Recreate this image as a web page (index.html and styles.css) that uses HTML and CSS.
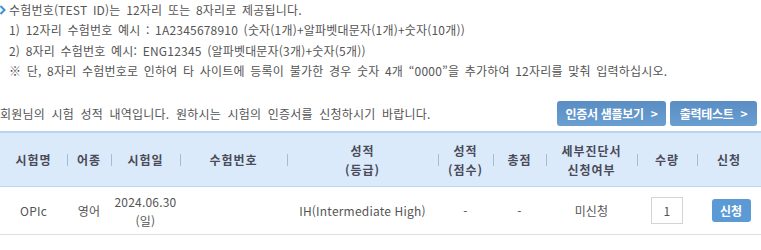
FILE: index.html
```html
<!DOCTYPE html>
<html lang="ko">
<head>
<meta charset="utf-8">
<link rel="stylesheet" href="styles.css">
</head>
<body>
<div class="notice">
  <p class="lead"><svg class="arrow" width="6" height="10" viewBox="0 0 6 10"><path d="M0.5 1 L4.5 5 L0.5 9" fill="none" stroke="#3d8fd6" stroke-width="2"/></svg>수험번호(TEST ID)는 12자리 또는 8자리로 제공됩니다.</p>
  <p class="sub">1) 12자리 수험번호 예시 : 1A2345678910 (숫자(1개)+알파벳대문자(1개)+숫자(10개))</p>
  <p class="sub">2) 8자리 수험번호 예시: ENG12345 (알파벳대문자(3개)+숫자(5개))</p>
  <p class="sub">※ 단, 8자리 수험번호로 인하여 타 사이트에 등록이 불가한 경우 숫자 4개 “0000”을 추가하여 12자리를 맞춰 입력하십시오.</p>
</div>
<div class="toolbar">
  <span class="desc">회원님의 시험 성적 내역입니다. 원하시는 시험의 인증서를 신청하시기 바랍니다.</span>
  <div class="btns">
    <a class="btn btn-sample">인증서 샘플보기 <span class="chev">&gt;</span></a>
    <a class="btn btn-print">출력테스트 <span class="chev">&gt;</span></a>
  </div>
</div>
<table class="grid">
  <colgroup>
    <col style="width:67px"><col style="width:44px"><col style="width:69px"><col style="width:107px"><col style="width:151px"><col style="width:55px"><col style="width:53px"><col style="width:91px"><col style="width:60px"><col>
  </colgroup>
  <thead>
    <tr>
      <th class="first">시험명</th>
      <th>어종</th>
      <th>시험일</th>
      <th>수험번호</th>
      <th>성적<br>(등급)</th>
      <th>성적<br>(점수)</th>
      <th>총점</th>
      <th>세부진단서<br>신청여부</th>
      <th>수량</th>
      <th>신청</th>
    </tr>
  </thead>
  <tbody>
    <tr>
      <td>OPIc</td>
      <td>영어</td>
      <td>2024.06.30<br>(일)</td>
      <td></td>
      <td>IH(Intermediate High)</td>
      <td>-</td>
      <td>-</td>
      <td>미신청</td>
      <td><span class="qty">1</span></td>
      <td><a class="apply">신청</a></td>
    </tr>
  </tbody>
</table>
</body>
</html>
```
FILE: styles.css
```css
html, body {
  margin: 0;
  padding: 0;
  background: #fff;
}
body {
  font-family: "Noto Sans CJK KR", "Noto Sans", sans-serif;
  font-size: 12px;
  color: #555;
  width: 761px;
  overflow: hidden;
}
.notice p {
  margin: 0;
  line-height: 20.3px;
  height: 20.3px;
  white-space: nowrap;
  color: #555;
  letter-spacing: 0.2px;
  word-spacing: 2px;
}
.lead {
  display: flex;
  align-items: center;
}
.arrow {
  margin-right: 3px;
  flex: none;
}
.sub {
  padding-left: 9px;
}
.toolbar {
  margin-top: 20px;
  display: flex;
  align-items: center;
  justify-content: space-between;
  height: 25px;
  padding-right: 4px;
}
.desc {
  color: #555;
  white-space: nowrap;
  letter-spacing: 0.2px;
  word-spacing: 3px;
}
.btns {
  display: flex;
  gap: 4px;
}
.btn {
  display: flex;
  align-items: center;
  justify-content: center;
  height: 25px;
  box-sizing: border-box;
  border-radius: 3px;
  background: linear-gradient(#5a8dc3, #6a9fd2);
  color: #fff;
  font-weight: bold;
  font-size: 12px;
  letter-spacing: -0.3px;
  white-space: nowrap;
}
.btn-sample { width: 109px; }
.btn-print { width: 87px; }
.chev {
  margin-left: 7px;
  font-weight: bold;
}
.grid {
  margin-top: 5px;
  width: 761px;
  border-collapse: collapse;
  table-layout: fixed;
}
.grid th {
  background: #dbeafb linear-gradient(#a3bdd8, #a3bdd8) no-repeat left center / 1px 12px;
  border-top: 2px solid #b7d3ef;
  border-bottom: 1px solid #b9d6f2;
  height: 53px;
  padding: 0;
  font-weight: bold;
  font-size: 12px;
  letter-spacing: 1px;
  line-height: 19px;
  color: #4a4a58;
  text-align: center;
}
.grid th.first {
  background-image: none;
}
.grid td {
  height: 47px;
  padding: 0;
  text-align: center;
  line-height: 19px;
  border-bottom: 1px solid #dedede;
  color: #555;
  white-space: nowrap;
  letter-spacing: 0.2px;
}
.qty {
  display: inline-block;
  width: 32px;
  height: 27px;
  box-sizing: border-box;
  border: 1px solid #d4d4d4;
  line-height: 25px;
  vertical-align: middle;
}
.apply {
  display: inline-block;
  width: 39px;
  height: 23px;
  line-height: 23px;
  border-radius: 3px;
  background: #5b9ad5;
  color: #fff;
  font-weight: bold;
  letter-spacing: 0;
  vertical-align: middle;
  margin-left: 4px;
}
```
